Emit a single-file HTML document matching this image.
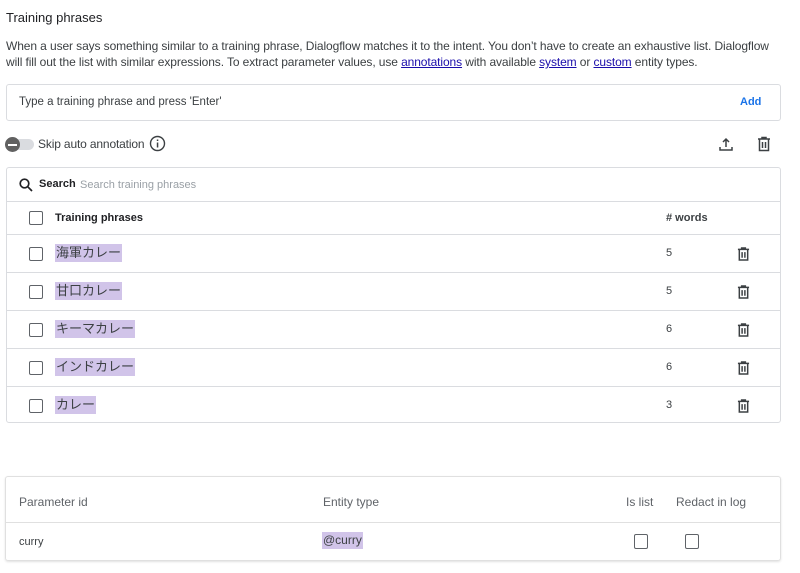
<!DOCTYPE html>
<html><head><meta charset="utf-8"><style>
*{box-sizing:border-box;margin:0;padding:0}
body{width:800px;height:573px;background:#fff;font-family:"Liberation Sans","Noto Sans CJK JP",sans-serif;color:#3c4043;position:relative;overflow:hidden}
.a{position:absolute}
.t{font-size:13px;color:#202124}
.d{font-size:12px;line-height:16px;color:#3c4043;letter-spacing:-0.1px}
a{color:#1a0dab;text-decoration:underline}
.box{border:1px solid #dadce0;border-radius:3px}
.cb{position:absolute;width:14px;height:14px;border:1.5px solid #5f6368;border-radius:2px}
.row{position:absolute;left:0;right:0;border-top:1px solid #dadce0}
.jp{position:absolute;left:48px;background:#d1c4e9;font-size:13px;color:#3c4043;padding:0 1px;line-height:18px}
.n{position:absolute;left:659px;font-size:11px;color:#3c4043}
</style></head><body>
<div class="a t" style="left:6px;top:10px">Training phrases</div>
<div class="a d" style="left:6px;top:38px;width:780px">When a user says something similar to a training phrase, Dialogflow matches it to the intent. You don’t have to create an exhaustive list. Dialogflow will fill out the list with similar expressions. To extract parameter values, use <a>annotations</a> with available <a>system</a> or <a>custom</a> entity types.</div>
<div class="a box" style="left:6px;top:84px;width:775px;height:37px">
<div class="a" style="left:12px;top:11px;font-size:11.5px;color:#3c4043">Type a training phrase and press 'Enter'</div>
<div class="a" style="left:733px;top:11px;font-size:11px;color:#1a73e8;font-weight:bold">Add</div>
</div>
<div class="a" style="left:6px;top:139px;width:28px;height:11px;background:#dadce0;border-radius:6px"></div>
<div class="a" style="left:5px;top:137px;width:15px;height:15px;background:#616161;border-radius:50%"><div style="position:absolute;left:3px;top:6.5px;width:9px;height:2px;background:#fff"></div></div>
<div class="a" style="left:38px;top:137px;font-size:12px;color:#3c4043;letter-spacing:-0.15px">Skip auto annotation</div>
<svg class="a" style="left:149px;top:135px" width="17" height="17" viewBox="0 0 17 17"><circle cx="8.5" cy="8.5" r="7" fill="none" stroke="#3c4043" stroke-width="1.4"/><rect x="7.8" y="7.5" width="1.5" height="5" fill="#3c4043"/><rect x="7.8" y="4.5" width="1.5" height="1.5" fill="#3c4043"/></svg>
<svg class="a" style="left:718px;top:136px" width="16" height="16" viewBox="0 0 16 16" fill="none" stroke="#3c4043" stroke-width="1.5"><path d="M8 11V3M5 6l3-3 3 3M2 11v3h12v-3"/></svg>
<svg class="a" style="left:757px;top:136px" width="14" height="16" viewBox="0 0 14 16" fill="none" stroke="#3c4043" stroke-width="1.5"><path d="M1 3h12M5 3V1.5h4V3M2.5 3v11.5h9V3M5.5 6v6M8.5 6v6"/></svg>
<div class="a box" style="left:6px;top:167px;width:775px;height:256px">
<svg class="a" style="left:12px;top:10px" width="14" height="14" viewBox="0 0 14 14" fill="none" stroke="#202124" stroke-width="1.7"><circle cx="5.5" cy="5.5" r="4.3"/><path d="M8.7 8.7l4.3 4.3"/></svg>
<div class="a" style="left:32px;top:10px;font-size:11px;font-weight:bold;color:#202124">Search</div>
<div class="a" style="left:73px;top:11px;font-size:11px;color:#9aa0a6">Search training phrases</div>
<div class="row" style="top:33px;height:34px"><div class="cb" style="left:22px;top:9px"></div><div class="a" style="left:48px;top:10px;font-size:11px;font-weight:bold;color:#202124">Training phrases</div><div class="a" style="left:659px;top:10px;font-size:11px;font-weight:bold;color:#3c4043"># words</div></div>
<div class="row" style="top:66px;height:38px"><div class="cb" style="left:22px;top:12px"></div><span class="jp" style="top:9px">海軍カレー</span><span class="n" style="top:12px">5</span><svg class="a" style="left:730px;top:11px" width="13" height="16" viewBox="0 0 14 16" fill="none" stroke="#3c4043" stroke-width="1.6"><path d="M1 3h12M5 3V1.5h4V3M2.5 3v11.5h9V3M5.5 6v6M8.5 6v6"/></svg></div>
<div class="row" style="top:104px;height:38px"><div class="cb" style="left:22px;top:12px"></div><span class="jp" style="top:9px">甘口カレー</span><span class="n" style="top:12px">5</span><svg class="a" style="left:730px;top:11px" width="13" height="16" viewBox="0 0 14 16" fill="none" stroke="#3c4043" stroke-width="1.6"><path d="M1 3h12M5 3V1.5h4V3M2.5 3v11.5h9V3M5.5 6v6M8.5 6v6"/></svg></div>
<div class="row" style="top:142px;height:38px"><div class="cb" style="left:22px;top:12px"></div><span class="jp" style="top:9px">キーマカレー</span><span class="n" style="top:12px">6</span><svg class="a" style="left:730px;top:11px" width="13" height="16" viewBox="0 0 14 16" fill="none" stroke="#3c4043" stroke-width="1.6"><path d="M1 3h12M5 3V1.5h4V3M2.5 3v11.5h9V3M5.5 6v6M8.5 6v6"/></svg></div>
<div class="row" style="top:180px;height:38px"><div class="cb" style="left:22px;top:12px"></div><span class="jp" style="top:9px">インドカレー</span><span class="n" style="top:12px">6</span><svg class="a" style="left:730px;top:11px" width="13" height="16" viewBox="0 0 14 16" fill="none" stroke="#3c4043" stroke-width="1.6"><path d="M1 3h12M5 3V1.5h4V3M2.5 3v11.5h9V3M5.5 6v6M8.5 6v6"/></svg></div>
<div class="row" style="top:218px;height:37px"><div class="cb" style="left:22px;top:12px"></div><span class="jp" style="top:9px">カレー</span><span class="n" style="top:12px">3</span><svg class="a" style="left:730px;top:11px" width="13" height="16" viewBox="0 0 14 16" fill="none" stroke="#3c4043" stroke-width="1.6"><path d="M1 3h12M5 3V1.5h4V3M2.5 3v11.5h9V3M5.5 6v6M8.5 6v6"/></svg></div>
</div>
<div class="a" style="left:5px;top:476px;width:776px;height:85px;border:1px solid #e0e0e0;border-radius:3px;box-shadow:0 1px 2px rgba(0,0,0,.12)">
<div class="a" style="left:13px;top:18px;font-size:12px;color:#5f6368">Parameter id</div>
<div class="a" style="left:317px;top:18px;font-size:12px;color:#5f6368">Entity type</div>
<div class="a" style="left:620px;top:18px;font-size:12px;color:#5f6368">Is list</div>
<div class="a" style="left:670px;top:18px;font-size:12px;color:#5f6368">Redact in log</div>
<div class="a" style="left:0;right:0;top:45px;border-top:1px solid #e0e0e0"></div>
<div class="a" style="left:13px;top:59px;font-size:11px;color:#3c4043">curry</div>
<div class="a" style="left:316px;top:55px;font-size:12px;color:#3c4043;background:#d1c4e9;line-height:17px;padding:0 1px">@curry</div>
<div class="cb" style="left:628px;top:57px;border-width:1px;width:14px;height:15px"></div>
<div class="cb" style="left:679px;top:57px;border-width:1px;width:14px;height:15px"></div>
</div>
</body></html>
